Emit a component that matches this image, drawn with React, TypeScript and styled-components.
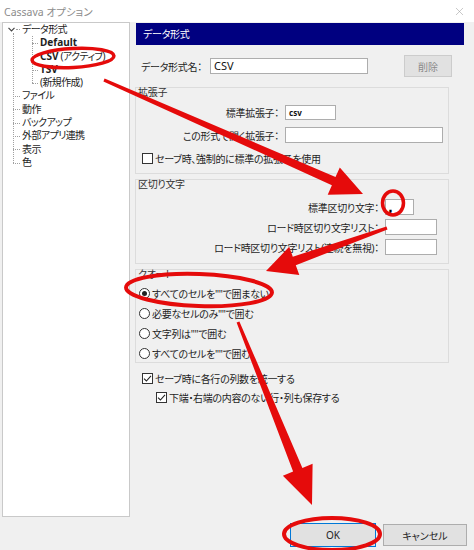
import React from 'react'
import styled, { createGlobalStyle } from 'styled-components'
import { X } from 'lucide-react'

const GlobalStyle = createGlobalStyle`
  html, body { margin: 0; padding: 0; }
  body {
    background: #f0f0f0;
    font-family: "Noto Sans", "Noto Sans CJK JP", sans-serif;
    font-size: 10px;
    letter-spacing: -0.3px;
    color: #1e1e1e;
    font-feature-settings: "palt" 1;
  }
`

const Window = styled.div`
  position: relative;
  width: 474px;
  height: 550px;
  overflow: hidden;
  display: flex;
  flex-direction: column;
  background: #f0f0f0;
`

const TitleBar = styled.div`
  flex: none;
  height: 22px;
  display: flex;
  align-items: center;
  justify-content: space-between;
  padding: 0 8px 0 4px;
  background: #ffffff;
  color: #8c8c8c;
  font-size: 10.5px;
  letter-spacing: 0;
`

const Main = styled.div`
  flex: none;
  height: 495px;
  display: flex;
`

/* ---------- tree ---------- */

const Tree = styled.div`
  flex: none;
  width: 128px;
  margin-left: 2px;
  box-sizing: border-box;
  background: #ffffff;
  border: 1px solid #c9c9c9;
  letter-spacing: -0.6px;
`

const TreeList = styled.div<{ $indent: number; $line: number; $top: number }>`
  position: relative;
  padding-left: ${p => p.$indent}px;
  &::before {
    content: '';
    position: absolute;
    left: ${p => p.$line}px;
    top: ${p => p.$top}px;
    bottom: 6.6px;
    border-left: 1px dotted #a0a0a0;
  }
`

const TreeRow = styled.div<{ $tick: number; $bold?: boolean }>`
  position: relative;
  height: 13.3px;
  line-height: 13.3px;
  white-space: nowrap;
  font-weight: ${p => (p.$bold ? 700 : 400)};
  letter-spacing: ${p => (p.$bold ? '0' : 'inherit')};
  &::before {
    content: '';
    position: absolute;
    left: -${p => p.$tick}px;
    width: ${p => p.$tick - 2}px;
    top: 50%;
    border-top: 1px dotted #a0a0a0;
  }
`

const ExpandRow = styled.div`
  display: flex;
  align-items: center;
  height: 13.3px;
  line-height: 13.3px;
  margin-left: -19px;
  white-space: nowrap;
`

const Chevron = styled.svg`
  flex: none;
  margin-left: 5px;
`

const Stub = styled.span`
  width: 4px;
  margin: 0 2px 0 1px;
  border-top: 1px dotted #a0a0a0;
`

const Plain = styled.span`
  font-weight: 400;
  letter-spacing: -0.6px;
`

/* ---------- right panel ---------- */

const Panel = styled.div`
  flex: 1;
  padding: 1px 10px 0 5px;
  display: flex;
  flex-direction: column;
`

const Header = styled.div`
  height: 22px;
  line-height: 22px;
  margin-left: 1px;
  padding-left: 7px;
  background: #000080;
  color: #ffffff;
`

const NameRow = styled.div`
  margin-top: 10px;
  height: 22px;
  display: flex;
  align-items: center;
`

const NameLabel = styled.span`
  width: 69px;
  padding-left: 6px;
`

const TextBox = styled.div<{ $w: number; $h?: number; $small?: boolean }>`
  box-sizing: border-box;
  flex: none;
  width: ${p => p.$w}px;
  height: ${p => p.$h ?? 16}px;
  line-height: ${p => (p.$h ?? 16) - 2}px;
  padding: 0 3px;
  border: 1px solid #adadad;
  background: #ffffff;
  color: #111;
  letter-spacing: 0;
  font-size: ${p => (p.$small ? '8px' : '11px')};
  font-weight: ${p => (p.$small ? 700 : 400)};
  overflow: hidden;
  white-space: nowrap;
`

/* the separator box shows a single comma, drawn a touch heavier */
const CharBox = styled.div<{ $w: number }>`
  box-sizing: border-box;
  flex: none;
  width: ${p => p.$w}px;
  height: 16px;
  padding: 0 0 0 2px;
  border: 1px solid #adadad;
  background: #ffffff;
  display: flex;
  align-items: flex-end;
  color: #000;
  font-family: "DejaVu Sans", sans-serif;
  font-size: 13px;
  font-weight: 700;
  line-height: 13px;
  letter-spacing: 0;
`

const Button = styled.div<{ $w: number; $h: number; $default?: boolean; $disabled?: boolean }>`
  box-sizing: border-box;
  flex: none;
  width: ${p => p.$w}px;
  height: ${p => p.$h}px;
  display: flex;
  align-items: center;
  justify-content: center;
  background: #e1e1e1;
  border: 1px solid ${p => (p.$default ? '#0078d7' : p.$disabled ? '#cccccc' : '#adadad')};
  color: ${p => (p.$disabled ? '#8a8a8a' : '#1e1e1e')};
  letter-spacing: 0;
`

const DeleteButton = styled(Button)`
  margin-left: 36px;
`

const Group = styled.div<{ $top: number; $pad: number }>`
  margin-top: ${p => p.$top}px;
  margin-right: 15px;
  padding-bottom: ${p => p.$pad}px;
  border: 1px solid #dcdcdc;
  display: flex;
  flex-direction: column;
`

const Legend = styled.div`
  height: 12px;
  line-height: 12px;
  margin-top: -2px;
  padding-left: 2px;
  color: #333;
`

const Rows = styled.div<{ $lead: number; $gap: number; $left?: number }>`
  margin-top: ${p => p.$lead}px;
  padding-left: ${p => p.$left ?? 0}px;
  display: flex;
  flex-direction: column;
  gap: ${p => p.$gap}px;
`

const Field = styled.div`
  display: flex;
  align-items: center;
  height: 16px;
`

const FieldLabel = styled.span<{ $w: number }>`
  box-sizing: border-box;
  width: ${p => p.$w}px;
  padding-right: 6px;
  text-align: right;
  white-space: nowrap;
`

const OptionRow = styled.div<{ $indent?: number }>`
  display: flex;
  align-items: center;
  height: 14px;
  padding-left: ${p => p.$indent ?? 0}px;
  white-space: nowrap;
`

const Box = styled.span`
  flex: none;
  box-sizing: border-box;
  width: 11px;
  height: 11px;
  margin-right: 2px;
  border: 1px solid #333;
  background: #ffffff;
  display: flex;
  align-items: center;
  justify-content: center;
`

const Radio = styled.span<{ $on?: boolean }>`
  flex: none;
  box-sizing: border-box;
  width: 11px;
  height: 11px;
  margin-right: 2px;
  border: 1px solid #333;
  border-radius: 50%;
  background: #ffffff;
  display: flex;
  align-items: center;
  justify-content: center;
  &::after {
    content: '';
    width: 5px;
    height: 5px;
    border-radius: 50%;
    background: ${p => (p.$on ? '#222' : 'transparent')};
  }
`

const Footer = styled.div`
  flex: 1;
  display: flex;
  justify-content: flex-end;
  align-items: flex-start;
  gap: 7px;
  padding: 6px 7px 0 0;
`

const CancelButton = styled(Button)`
  margin-top: 1px;
`

const Overlay = styled.svg`
  position: absolute;
  left: 0;
  top: 0;
  pointer-events: none;
`

type Pt = [number, number]

const arrowPoints = (from: Pt, to: Pt, tailW: number, shaftW: number, headLen: number, headHalf: number) => {
  const dx = to[0] - from[0]
  const dy = to[1] - from[1]
  const len = Math.hypot(dx, dy)
  const ux = dx / len
  const uy = dy / len
  const nx = -uy
  const ny = ux
  const bx = to[0] - ux * headLen
  const by = to[1] - uy * headLen
  const pts: Pt[] = [
    [from[0] + (nx * tailW) / 2, from[1] + (ny * tailW) / 2],
    [bx + (nx * shaftW) / 2, by + (ny * shaftW) / 2],
    [bx + nx * headHalf, by + ny * headHalf],
    to,
    [bx - nx * headHalf, by - ny * headHalf],
    [bx - (nx * shaftW) / 2, by - (ny * shaftW) / 2],
    [from[0] - (nx * tailW) / 2, from[1] - (ny * tailW) / 2],
  ]
  return pts.map(p => p.map(v => v.toFixed(1)).join(',')).join(' ')
}

const Check = () => (
  <svg width="9" height="9" viewBox="0 0 9 9">
    <path d="M1 4.6 L3.4 7 L8 1.8" fill="none" stroke="#222" strokeWidth="1.1" />
  </svg>
)

const RED = '#e50b0b'

export default function App() {
  return (
    <Window>
      <GlobalStyle />
      <TitleBar>
        <span>Cassava オプション</span>
        <X size={13} strokeWidth={1} color="#9a9a9a" />
      </TitleBar>

      <Main>
        <Tree>
          <TreeList $indent={19} $line={10} $top={10}>
            <ExpandRow>
              <Chevron width="7" height="5" viewBox="0 0 7 5">
                <path d="M0.5 0.8 L3.5 3.8 L6.5 0.8" fill="none" stroke="#444" strokeWidth="1.2" />
              </Chevron>
              <Stub />
              データ形式
            </ExpandRow>
            <TreeList $indent={18} $line={10} $top={0}>
              <TreeRow $tick={8} $bold>Default</TreeRow>
              <TreeRow $tick={8} $bold>
                CSV<Plain> (アクティブ)</Plain>
              </TreeRow>
              <TreeRow $tick={8} $bold>TSV</TreeRow>
              <TreeRow $tick={8}>(新規作成)</TreeRow>
            </TreeList>
            <TreeRow $tick={9}>ファイル</TreeRow>
            <TreeRow $tick={9}>動作</TreeRow>
            <TreeRow $tick={9}>バックアップ</TreeRow>
            <TreeRow $tick={9}>外部アプリ連携</TreeRow>
            <TreeRow $tick={9}>表示</TreeRow>
            <TreeRow $tick={9}>色</TreeRow>
          </TreeList>
        </Tree>

        <Panel>
          <Header>データ形式</Header>

          <NameRow>
            <NameLabel>データ形式名：</NameLabel>
            <TextBox $w={158}>CSV</TextBox>
            <DeleteButton $w={48} $h={22} $disabled>削除</DeleteButton>
          </NameRow>

          <Group $top={10} $pad={8}>
            <Legend>拡張子</Legend>
            <Rows $lead={6} $gap={7}>
              <Field>
                <FieldLabel $w={149}>標準拡張子：</FieldLabel>
                <TextBox $w={51} $h={15} $small>csv</TextBox>
              </Field>
              <Field>
                <FieldLabel $w={149}>この形式で開く拡張子：</FieldLabel>
                <TextBox $w={158} />
              </Field>
            </Rows>
            <Rows $lead={8} $gap={0} $left={6}>
              <OptionRow>
                <Box />
                セーブ時、強制的に標準の拡張子を使用
              </OptionRow>
            </Rows>
          </Group>

          <Group $top={5} $pad={8}>
            <Legend>区切り文字</Legend>
            <Rows $lead={9} $gap={4}>
              <Field>
                <FieldLabel $w={249}>標準区切り文字：</FieldLabel>
                <CharBox $w={29}>,</CharBox>
              </Field>
              <Field>
                <FieldLabel $w={249}>ロード時区切り文字リスト：</FieldLabel>
                <TextBox $w={52} />
              </Field>
              <Field>
                <FieldLabel $w={249}>ロード時区切り文字リスト(連続を無視)：</FieldLabel>
                <TextBox $w={52} />
              </Field>
            </Rows>
          </Group>

          <Group $top={5} $pad={2}>
            <Legend>クオート</Legend>
            <Rows $lead={6} $gap={6} $left={3}>
              <OptionRow>
                <Radio $on />
                {'すべてのセルを""で囲まない'}
              </OptionRow>
              <OptionRow>
                <Radio />
                {'必要なセルのみ""で囲む'}
              </OptionRow>
              <OptionRow>
                <Radio />
                {'文字列は""で囲む'}
              </OptionRow>
              <OptionRow>
                <Radio />
                {'すべてのセルを""で囲む'}
              </OptionRow>
            </Rows>
          </Group>

          <Rows $lead={8} $gap={5}>
            <OptionRow $indent={7}>
              <Box>
                <Check />
              </Box>
              セーブ時に各行の列数を統一する
            </OptionRow>
            <OptionRow $indent={21}>
              <Box>
                <Check />
              </Box>
              下端・右端の内容のない行・列も保存する
            </OptionRow>
          </Rows>
        </Panel>
      </Main>

      <Footer>
        <Button $w={86} $h={24} $default>OK</Button>
        <CancelButton $w={84} $h={22}>キャンセル</CancelButton>
      </Footer>

      <Overlay width="474" height="550" viewBox="0 0 474 550">
        <ellipse cx="73" cy="58" rx="41" ry="9.5" fill="none" stroke={RED} strokeWidth="3.5" transform="rotate(-3 73 58)" />
        <polygon points={arrowPoints([104, 80], [363, 194], 3, 9, 32, 15)} fill={RED} />
        <ellipse cx="393" cy="203" rx="10.5" ry="12" fill="none" stroke={RED} strokeWidth="3.5" />
        <polygon points={arrowPoints([387, 228], [266, 271], 3, 9, 30, 15)} fill={RED} />
        <ellipse cx="199" cy="290" rx="73" ry="16" fill="none" stroke={RED} strokeWidth="4" transform="rotate(2 199 290)" />
        <polygon points={arrowPoints([238, 322], [312, 505], 3, 10, 38, 16)} fill={RED} />
        <ellipse cx="332" cy="534" rx="48" ry="16" fill="none" stroke={RED} strokeWidth="4" />
      </Overlay>
    </Window>
  )
}
